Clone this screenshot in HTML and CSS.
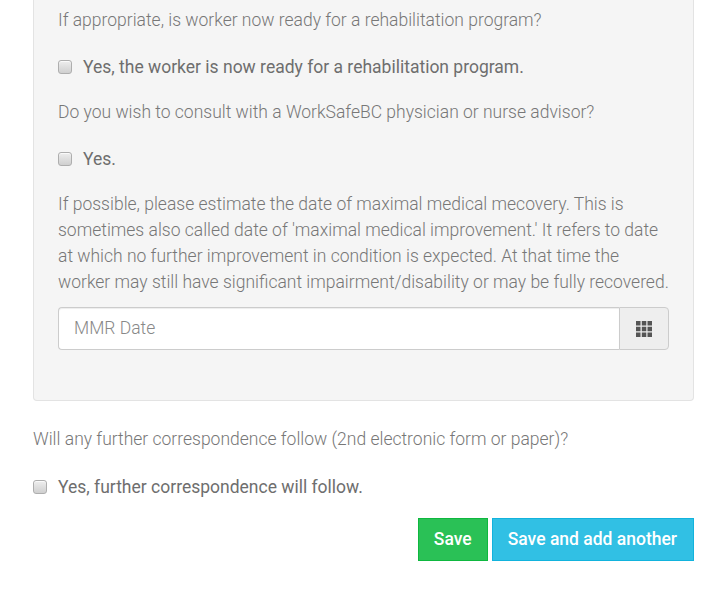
FILE: index.html
```html
<!DOCTYPE html>
<html lang="en">
<head>
<meta charset="utf-8">
<title>Form</title>
<link rel="stylesheet" href="styles.css">
</head>
<body>
<form class="page">
  <section class="well">
    <p class="question">If appropriate, is worker now ready for a rehabilitation program?</p>
    <label class="check"><input type="checkbox"><span>Yes, the worker is now ready for a rehabilitation program.</span></label>
    <p class="question">Do you wish to consult with a WorkSafeBC physician or nurse advisor?</p>
    <label class="check"><input type="checkbox"><span>Yes.</span></label>
    <p class="question">If possible, please estimate the date of maximal medical mecovery. This is sometimes also called date of 'maximal medical improvement.' It refers to date at which no further improvement in condition is expected. At that time the worker may still have significant impairment/disability or may be fully recovered.</p>
    <div class="date-group">
      <input class="date-input" type="text" placeholder="MMR Date">
      <span class="date-addon">
        <svg width="16" height="16" viewBox="0 0 16 16" aria-hidden="true"><path fill="#555" d="M0 0h4.500v4.500H0zM5.800 0h4.500v4.500H5.800zM11.500 0H16v4.500h-4.500zM0 5.800h4.500v4.500H0zM5.800 5.800h4.500v4.500H5.800zM11.500 5.800H16v4.500h-4.500zM0 11.500h4.500V16H0zM5.800 11.500h4.500V16H5.800zM11.500 11.500H16V16h-4.500z"/></svg>
      </span>
    </div>
  </section>
  <p class="question">Will any further correspondence follow (2nd electronic form or paper)?</p>
  <label class="check"><input type="checkbox"><span>Yes, further correspondence will follow.</span></label>
  <div class="actions">
    <button class="btn btn-save" type="button">Save</button>
    <button class="btn btn-add" type="button">Save and add another</button>
  </div>
</form>
</body>
</html>
```
FILE: styles.css
```css
* { box-sizing: border-box; }
html, body { margin: 0; background: #fff; }
body {
  font-family: Roboto, "Liberation Sans", sans-serif;
  font-size: 17.5px;
  line-height: 26.25px;
  color: #777;
  height: 590px;
  overflow: hidden;
}
.page { padding: 0 34px 0 33px; }
.well {
  background: #f5f5f5;
  border: 1px solid #e3e3e3;
  border-top: 0;
  border-radius: 0 0 4px 4px;
  padding: 7px 24px 50px;
  height: 401px;
}
.question {
  margin: 0;
  font-weight: 300;
  color: #777;
}
.check {
  display: flex;
  align-items: center;
  gap: 11px;
  font-weight: 400;
  color: #6e6e6e;
  margin: 20px 0 19px;
}
.well > .check:nth-child(2) { margin-top: 20.5px; }
.well > .check:nth-child(4) { margin: 21px 0 18px; }
.well + .question + .check { margin-top: 22px; }
.check input {
  appearance: none;
  margin: 0;
  width: 14px;
  height: 14px;
  flex: none;
  background: linear-gradient(#eee, #cfcfcf);
  border: 1px solid #aeaeae;
  border-radius: 3px;
  box-shadow: inset 0 1px 0 #fafafa;
}
.date-group { display: flex; height: 43px; margin-top: 11.5px; }
.date-input {
  flex: 1;
  min-width: 0;
  border: 1px solid #ccc;
  border-right: 0;
  border-radius: 4px 0 0 4px;
  background: #fff;
  padding: 0 15px 2px;
  font: 300 17.5px Roboto, "Liberation Sans", sans-serif;
  box-shadow: inset 0 1px 1px rgba(0,0,0,.075);
}
.date-input::placeholder { color: #888; opacity: 1; }
.date-addon {
  width: 50px;
  display: flex;
  align-items: center;
  justify-content: center;
  background: #eee;
  border: 1px solid #ccc;
  border-radius: 0 4px 4px 0;
}
.well + .question { margin-top: 25px; }
.actions { display: flex; justify-content: flex-end; gap: 4px; margin-top: -1.500px; }
.btn {
  height: 43px;
  padding: 0 15px 2px;
  border: 1px solid;
  border-radius: 0;
  color: #fff;
  font: 500 17.5px Roboto, "Liberation Sans", sans-serif;
}
.btn-save { background: #2ac156; border-color: #0eb83f; }
.btn-add { background: #31c0e4; border-color: #12b3dd; padding: 0 16px 2px 15px; }
```
